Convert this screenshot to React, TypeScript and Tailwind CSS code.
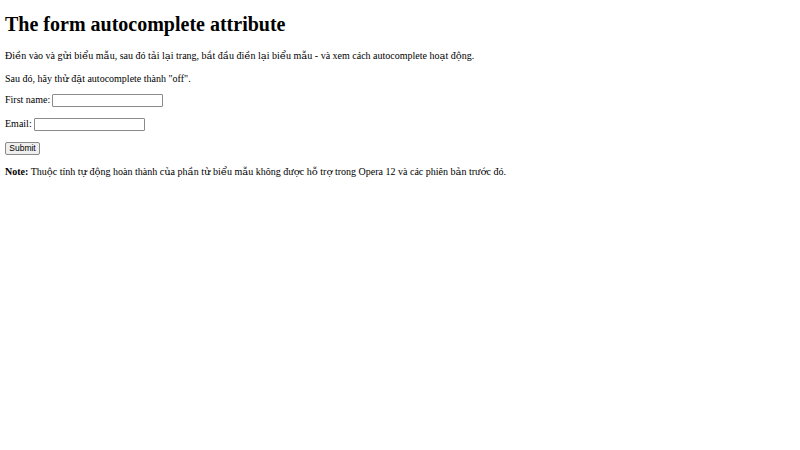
import React from 'react';

// Vietnamese letters from the Latin Extended Additional block render in a wider fallback face
function Viet({ text }: { text: string }) {
  const parts = text.split(/([\u1EA0-\u1EF9])/);
  return (
    <>
      {parts.map((part, i) =>
        /^[\u1EA0-\u1EF9]$/.test(part) ? (
          <span key={i} className="font-['DejaVu_Serif',serif]">
            {part}
          </span>
        ) : (
          <React.Fragment key={i}>{part}</React.Fragment>
        )
      )}
    </>
  );
}

export default function App() {
  return (
    <div className="min-h-[450px] bg-white px-[5px] pt-[13px] font-['Liberation_Serif',serif] text-[10px] leading-[12px] text-black">
      <h1 className="mb-[14px] text-[20px] font-bold leading-[23px]">The form autocomplete attribute</h1>
      <p className="mb-[11px]">
        <Viet text="Điền vào và gửi biểu mẫu, sau đó tải lại trang, bắt đầu điền lại biểu mẫu - và xem cách autocomplete hoạt động." />
      </p>
      <p className="mb-[7.5px]">
        <Viet text={'Sau đó, hãy thử đặt autocomplete thành "off".'} />
      </p>

      {/* form rows */}
      <form className="flex flex-col gap-[9px]" onSubmit={(e) => e.preventDefault()}>
        <div className="flex h-[15px] items-center">
          <label htmlFor="fname">First name:</label>
          <input
            id="fname"
            type="text"
            className="ml-[2px] h-[13px] w-[111px] rounded-[1px] border border-[#8a8a8a] bg-white px-[1px] text-[8.3px] outline-none"
          />
        </div>
        <div className="flex h-[15px] items-center">
          <label htmlFor="email">Email:</label>
          <input
            id="email"
            type="email"
            className="ml-[2.5px] h-[13px] w-[111px] rounded-[1px] border border-[#8a8a8a] bg-white px-[1px] text-[8.3px] outline-none"
          />
        </div>
        <div className="flex h-[15px] items-center">
          <button
            type="submit"
            className="flex h-[13px] w-[35px] items-center justify-center rounded-[2px] border border-[#8a8a8a] bg-[#efefef] font-['Liberation_Sans',sans-serif] text-[8.5px] leading-none text-black"
          >
            Submit
          </button>
        </div>
      </form>

      <p className="mt-[10px]">
        <strong>Note:</strong>{' '}
        <Viet text="Thuộc tính tự động hoàn thành của phần tử biểu mẫu không được hỗ trợ trong Opera 12 và các phiên bản trước đó." />
      </p>
    </div>
  );
}
